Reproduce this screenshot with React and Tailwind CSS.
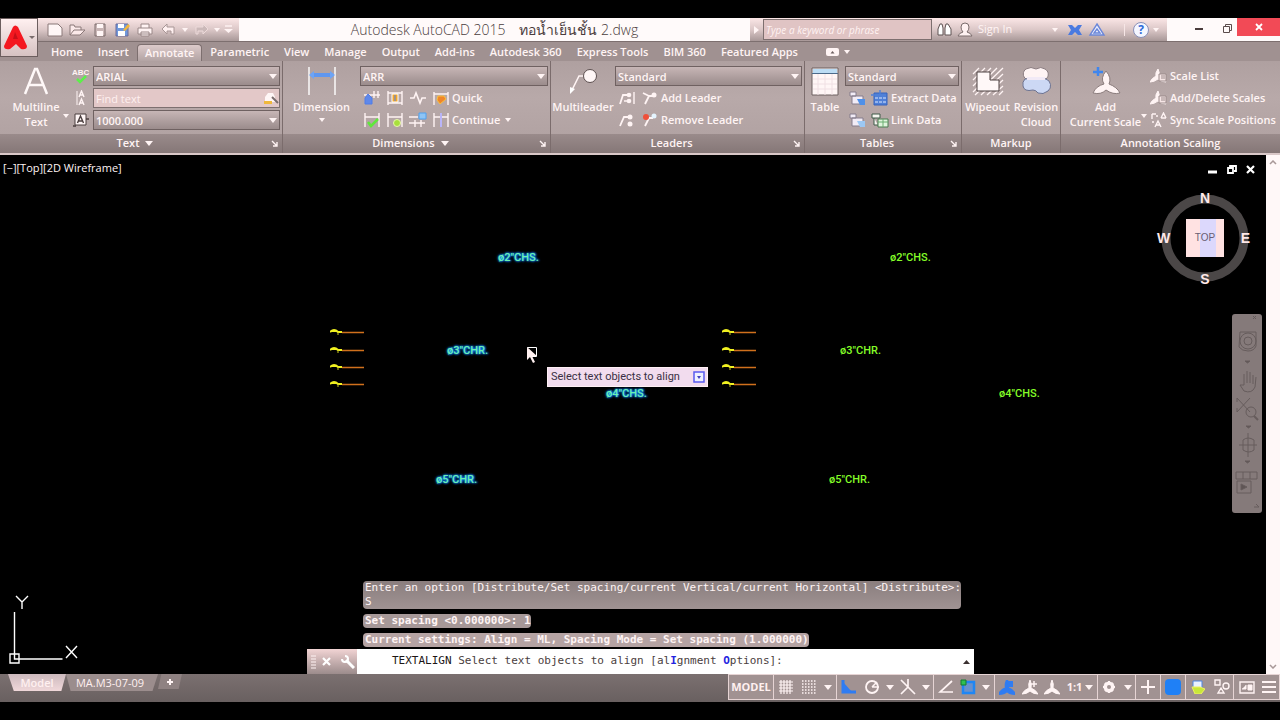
import React from "react";

const W = "#fff4f4";

function Ic({ w = 18, h = 16, children }) {
  return (
    <svg width={w} height={h} viewBox={`0 0 ${w} ${h}`} fill="none" stroke={W} strokeWidth="1.4" className="shrink-0" aria-hidden="true">
      {children}
    </svg>
  );
}

function Down({ small }) {
  return small ? (
    <svg width="6" height="4" viewBox="0 0 6 4" className="shrink-0" aria-hidden="true"><path d="M0 0h6L3 4z" fill={W} /></svg>
  ) : (
    <svg width="8" height="5" viewBox="0 0 8 5" className="shrink-0" aria-hidden="true"><path d="M0 0h8L4 5z" fill={W} /></svg>
  );
}

/* ---------- title bar icons ---------- */
const NewIcon = () => <Ic><path d="M2 2h10l4 4v8H2z" fill="#fff6f6" stroke="#8a7878" strokeWidth="1" /></Ic>;
const OpenIcon = () => <Ic><path d="M2 13V3h4l1 2h6v3M2 13l4-5h11l-5 5z" fill="#fbe9e9" stroke="#8a7878" strokeWidth="1" /></Ic>;
const SaveIcon = () => <Ic w={16}><path d="M3 2h10v12H3z" fill="#c9b6b6" stroke="#7d6c6c" strokeWidth="1" /><path d="M5 2h6v4H5zM5 9h6v5H5z" fill="#fff6f6" stroke="none" /></Ic>;
const SaveAsIcon = () => <Ic w={16}><path d="M2 2h12v12H2z" fill="#6f98dc" stroke="#6a6a9a" strokeWidth="1" /><path d="M4 2h6v4H4zM4 9h7v5H4z" fill="#fff" stroke="none" /><path d="M9 8l5-6 2 2-5 5z" fill="#f2b63c" stroke="none" /></Ic>;
const PrintIcon = () => <Ic><path d="M5 6V2h8v4M2 6h14v6H2zM5 10h8v4H5z" fill="#fff3f3" stroke="#9a8888" strokeWidth="1" /></Ic>;
const UndoIcon = () => <Ic><path d="M2 7l5-5v3h7v7h-3V9H7v3z" fill="#fff0f0" stroke="#a89696" strokeWidth="1" /></Ic>;
const RedoIcon = () => <Ic><path d="M16 7l-5-5v3H4v7h2V9h5v3z" fill="#cbb9b9" stroke="#eddada" strokeWidth="1" /></Ic>;

/* ---------- ribbon icons ---------- */
const SpellIcon = () => (
  <Ic w={18} h={16}>
    <text x="0" y="7" fontSize="8" fontWeight="700" fontFamily="Liberation Sans, sans-serif" fill={W} stroke="none">ABC</text>
    <path d="M5 11l3 3 6-6" stroke="#5cf04a" strokeWidth="2.500" />
  </Ic>
);
const AlignTextIcon = () => (
  <Ic w={18} h={16}>
    <path d="M5 1v14" strokeWidth="1" />
    <path d="M7 7l2.500-6L12 7M8 5h3M7 15l2.500-6 2.500 6M8 13h3" />
  </Ic>
);
const HeightIcon = () => (
  <Ic w={18} h={16}>
    <path d="M3 2h11v11H3z" fill="#fff6f6" stroke="#4a3e3e" strokeWidth="1" />
    <path d="M5.500 11L8.500 4l3 7M6.500 9h4" stroke="#4a3e3e" />
    <path d="M1 14h3M14 7h3" stroke="#4a3e3e" />
  </Ic>
);
const DimIcon = () => (
  <Ic w={28} h={30}>
    <path d="M1 1v28M27 1v28" stroke="#fff" />
    <path d="M3 9h22" stroke="#5f97f0" strokeWidth="4" />
    <path d="M1 9l5-4v8zM27 9l-5-4v8z" fill="#6ea4f5" stroke="none" />
  </Ic>
);
const BreakIcon = () => <Ic><path d="M1 5h16M11 1v7M15 1v7" /><path d="M5 4l4 4v6H2V8z" fill="#5f88ea" stroke="#4f7ce8" strokeWidth="1" /></Ic>;
const AdjustIcon = () => <Ic><path d="M2 1v14M16 1v14M2 3h14M2 13h14" /><path d="M6 4h6v8H6z" fill="#f4a62a" stroke="#fff" strokeWidth="1" /><path d="M9 5v6" stroke="#4d80ee" strokeWidth="1" /></Ic>;
const JogIcon = () => <Ic><path d="M1 8h4l2-5 4 10 2-5h4" strokeWidth="1.600" /></Ic>;
const QuickIcon = () => <Ic><path d="M2 2v13M16 2v13M2 4h14" /><path d="M6 6h6l2 3-6 5-3-4z" fill="#f0862a" stroke="#f9c040" strokeWidth="1" /></Ic>;
const InspectIcon = () => <Ic><path d="M2 1v14M16 1v14M2 5h14" /><path d="M5 10l3 4 7-7" stroke="#5fe83a" strokeWidth="2.500" /></Ic>;
const UpdateIcon = () => <Ic><path d="M2 1v14M16 1v14M2 5h14" /><circle cx="11" cy="11" r="3.500" fill="#a8e03c" stroke="#e9f7b0" strokeWidth="1" /></Ic>;
const SpaceIcon = () => <Ic><path d="M0 5h9M0 11h16M6 8v7M12 8v7" /><path d="M10 1h7v6h-7z" fill="#8ec4f4" stroke="#4fa0ee" strokeWidth="1" /></Ic>;
const ContinueIcon = () => <Ic><path d="M2 1v14M16 1v14M2 5h14" /><path d="M9 1v14" stroke="#b9b4f8" strokeWidth="2" /></Ic>;
const LeaderIcon = () => (
  <Ic w={32} h={30}>
    <path d="M5 24L12 10h6" strokeWidth="1.600" />
    <path d="M3 28l0-7 5 2z" fill="#fff" stroke="none" />
    <circle cx="23" cy="10" r="6.500" fill="#fff6f6" stroke="#5d5050" strokeWidth="1" />
  </Ic>
);
const LAlignIcon = () => <Ic><path d="M2 14l3-9h4" strokeWidth="1.800" /><path d="M6 11h4M16 2v12" /><circle cx="11" cy="5" r="2.300" fill={W} stroke="none" /><circle cx="11" cy="11" r="2.300" fill={W} stroke="none" /></Ic>;
const LCollectIcon = () => <Ic><path d="M2 14l4-9h4" strokeWidth="1.800" /><circle cx="12" cy="5" r="2.500" fill={W} stroke="none" /><circle cx="12" cy="12" r="2.500" fill={W} stroke="none" /></Ic>;
const LAddIcon = () => <Ic><path d="M4 14l4-8h4M2 3l6 3" strokeWidth="1.800" /><circle cx="13" cy="5" r="2.500" fill={W} stroke="none" /></Ic>;
const LRemoveIcon = () => <Ic><path d="M4 14l4-8h4" strokeWidth="1.800" /><circle cx="5" cy="5" r="3" fill="#f0503a" stroke="none" /><circle cx="13" cy="4" r="2.500" fill="#e4f4ff" stroke="none" /></Ic>;
const TableIcon = () => (
  <Ic w={28} h={30}>
    <path d="M1 2h26v27H1z" fill="#fff6f6" stroke="#6d6060" strokeWidth="1" />
    <path d="M2 3h24v4H2z" fill="#bcdcf4" stroke="none" />
    <path d="M1 7.500h26" stroke="#4c6a8a" strokeWidth="1" />
    <path d="M7 8v21M14 8v21M21 8v21M2 13h24M2 18h24M2 23h24" stroke="#f0e0e4" strokeWidth="1" />
  </Ic>
);
const SheetIcon = ({ c }) => <Ic><path d="M2 2h6v4H2zM4 6h11v8H4z" fill="#f2ecf6" stroke="#857c8c" strokeWidth="1" /><path d="M9 9h8v6h-5z" fill={c} stroke="none" /></Ic>;
const ExtractIcon = () => <Ic><path d="M3 3h13v12H3z" fill="#4f80d8" stroke="#3763bb" strokeWidth="1" /><path d="M4 8h11M4 12h11" stroke="#dce8ff" strokeWidth="1" strokeDasharray="3 1" /><path d="M0 5h6M9 0v5" stroke="#4f80d8" /></Ic>;
const LinkIcon = () => <Ic><path d="M1 2h8v4H1zM3 6v7h4" stroke="#3f5a48" fill="#f6f6f0" strokeWidth="1" /><path d="M7 7h10v8H7z" fill="#dff4dc" stroke="#4a7a50" strokeWidth="1" /><path d="M7 10h10M12 7v8" stroke="#6aae70" strokeWidth="1" /></Ic>;
const WipeoutIcon = () => (
  <Ic w={32} h={30}>
    <path d="M1 8l6-6M1 14L13 2M1 20L19 2M1 26L25 2M3 29L31 2M9 29L31 8M15 29l16-15M21 29l10-9M27 29l4-4" strokeWidth="1.300" />
    <path d="M5 6h13v8h9v11H5z" fill="#fff8f8" stroke="#4c4040" strokeWidth="1" />
  </Ic>
);
const CloudIcon = () => (
  <Ic w={30} h={30}>
    <path d="M5 13a6 6 0 0 1 0-10q5-3 10 0 5-3 9 0a6 6 0 0 1 1 10z" fill="#fff4f4" stroke="#8a7c80" strokeWidth="1" />
    <path d="M4 13q11-2 21 0a7 7 0 0 1 2 12q-5 4-10 2-2-3-5-3-9 2-10-4-1-4 2-7z" fill="#ccd8f4" stroke="#6c7290" strokeWidth="1" />
    <path d="M6 11h18v3H6z" fill="#f2eaf6" stroke="none" />
  </Ic>
);
const TRI = "M12 0q6 7 3 13 8 3 11 9-7 2-14-3-5 5-13 3 3-7 11-9Q6 7 12 0z";
const ScaleIcon = () => (
  <Ic w={30} h={30}>
    <g transform="translate(3 5)"><path d={TRI} fill="#fff4f4" stroke="#8a7c7c" strokeWidth="1" /></g>
    <path d="M7 1v9M2 6h10" stroke="#3f86ee" strokeWidth="2.500" />
  </Ic>
);
const MiniScale = () => (
  <Ic>
    <path d="M8 1q2 4 1 7 5 2 7 6-5 0-8-3-4 3-8 3 2-4 6-6-1-3 2-7z" fill={W} stroke={W} strokeWidth="1" />
    <path d="M9 6h7v7H9z" fill="#f6e6e6" stroke="#9a8a8a" strokeWidth="1" />
    <path d="M11 8h4M11 10h4" stroke="#9a8a8a" strokeWidth="1" />
  </Ic>
);
const SyncIcon = () => <Ic><path d="M2 2h4M2 2v5M11 6l2.500-5L16 6M11 6h5M2 10h2" /><path d="M5 15l3-6 3 6M6 13h4M6 4h2" /></Ic>;

/* ---------- ribbon parts ---------- */
function Panel({ title, arrow, launcher, children }) {
  return (
    <section className="flex min-w-0 flex-col border-r border-[#7b6c6c] last:border-r-0">
      <div className="flex h-[73px] bg-gradient-to-b from-[#afa0a0] via-[#b8a9a9] to-[#b2a3a3] pt-[5px]">{children}</div>
      <div className={`relative flex h-[19px] items-center justify-center gap-[6px] bg-gradient-to-b from-[#9a8b8b] to-[#857777] text-[11px] font-semibold ${launcher ? "pr-[12px]" : ""}`}>
        <h2>{title}</h2>
        {arrow && <Down />}
        {launcher && (
          <button aria-label={`${title} settings`} className="absolute right-[4px]">
            <Ic w={7} h={7}><path d="M1 1l5 5M6 2v4H2" /></Ic>
          </button>
        )}
      </div>
    </section>
  );
}

function Big({ icon, lines, arrow, sideArrow, className }) {
  return (
    <button className={`relative flex shrink-0 flex-col items-center text-[11px] font-semibold leading-[15px] ${className}`}>
      <span className="flex h-[33px] items-start justify-center">{icon}</span>
      {lines.map((l) => <span key={l} className="whitespace-nowrap">{l}</span>)}
      {arrow && <span className="pt-1"><Down small /></span>}
      {sideArrow && <span className="absolute right-[3px] top-[48px]"><Down small /></span>}
    </button>
  );
}

function Combo({ label, value }) {
  return (
    <div className="relative flex h-[20px] w-full items-center">
      <select aria-label={label} className="h-full w-full appearance-none border border-[#6f6161] bg-gradient-to-b from-[#c7b6b6] to-[#9b8c8c] px-[2px] text-[11px] font-semibold leading-none text-[#fff4f4]" defaultValue={value}>
        <option>{value}</option>
      </select>
      <span className="pointer-events-none absolute right-[3px]"><Down /></span>
    </div>
  );
}

const Tool = ({ label, children }) => <button aria-label={label} className="flex w-[23px] shrink-0 items-center justify-center">{children}</button>;

function Row({ children }) {
  return <div className="flex h-[20px] items-center whitespace-nowrap text-[11px] font-semibold">{children}</div>;
}

/* ---------- drawing content ---------- */
const labels = [
  { t: 'ø2"CHS.', pos: "left-[498px] top-[95px]", sel: true },
  { t: 'ø3"CHR.', pos: "left-[447px] top-[188px]", sel: true },
  { t: 'ø4"CHS.', pos: "left-[606px] top-[231px]", sel: true },
  { t: 'ø5"CHR.', pos: "left-[436px] top-[317px]", sel: true },
  { t: 'ø2"CHS.', pos: "left-[890px] top-[95px]" },
  { t: 'ø3"CHR.', pos: "left-[840px] top-[188px]" },
  { t: 'ø4"CHS.', pos: "left-[999px] top-[231px]" },
  { t: 'ø5"CHR.', pos: "left-[829px] top-[317px]" },
];

function Pipes({ className }) {
  return (
    <svg width="36" height="62" viewBox="0 0 36 62" className={`absolute ${className}`} aria-hidden="true">
      {[5, 23, 40, 57].map((y) => (
        <g key={y}>
          <path d={`M12 ${y + 0.5}h22`} stroke="#d0701c" strokeWidth="1.500" />
          <path d={`M0 ${y}q4-4 8 0l4 0`} stroke="#f0f020" strokeWidth="2" fill="#f0f020" />
          <path d={`M8 ${y}v3`} stroke="#c8c820" strokeWidth="1" />
        </g>
      ))}
    </svg>
  );
}

function ViewCube() {
  return (
    <div className="absolute right-[12px] top-[34px] h-[98px] w-[98px] text-[14px] font-bold leading-[16px] text-[#ffe9e9]" style={{ fontFamily: "Liberation Sans, sans-serif" }}>
      <svg width="98" height="98" viewBox="0 0 98 98" aria-hidden="true"><circle cx="49" cy="49" r="39" fill="none" stroke="#4b4747" strokeWidth="9" /></svg>
      <span className="absolute inset-x-0 top-[1px] text-center">N</span>
      <span className="absolute inset-x-0 bottom-0 text-center">S</span>
      <span className="absolute left-[1px] top-[41px]">W</span>
      <span className="absolute right-[4px] top-[41px]">E</span>
      <button className="absolute left-[30px] top-[30px] h-[38px] w-[38px] bg-[linear-gradient(90deg,#ffe2e2_36%,#dcd8fc_38%,#dcd8fc_78%,#ffe2e2_80%)] text-[10px] font-normal text-[#6a5f72]">TOP</button>
    </div>
  );
}

function NavBar() {
  return (
    <svg width="30" height="199" viewBox="0 0 30 199" className="absolute right-[4px] top-[159px]" fill="none" stroke="#665c5c" strokeWidth="1" role="img" aria-label="Navigation bar">
      <rect x="0" y="0" width="30" height="199" rx="3" fill="#857a7a" stroke="none" />
      <path d="M21 2l3 3M24 2l-3 3M8 18h16v14q-2 5-8 5t-9-4z" />
      <circle cx="16" cy="27" r="8" /><circle cx="16" cy="27" r="4" />
      <path d="M13 47h5l-2.500 2z" fill="#5f5555" />
      <path d="M8 71l4 6q8 3 11-4l1-10M12 71V60M15 69V57M18 69V58M21 70V61M8 71l4 0" />
      <path d="M5 84l13 14M18 84L5 98M5 84v4M5 98v-4" /><circle cx="19" cy="98" r="5" /><path d="M22 102l4 4" strokeWidth="2" />
      <path d="M14 112h5l-2.500 2z" fill="#5f5555" />
      <path d="M16 119v24M7 131h18M11 126q5-4 11 0v10q-5 4-11 0z" />
      <path d="M13 147h5l-2.500 2z" fill="#5f5555" />
      <path d="M4 158h21v7H4zM11 158v7M18 158v7M5 167h14v12H5z" /><path d="M9 170l6 3-6 3z" fill="#5f5555" />
      <path d="M22 193h5M24 190l3 3" />
    </svg>
  );
}

/* ---------- status bar ---------- */
const Cell = ({ label, w, children }) => <button aria-label={label} className={`flex h-full shrink-0 items-center justify-center ${w}`}>{children}</button>;
const Group = ({ children }) => <div className="flex h-[26px] shrink-0 items-center border border-l-0 border-[#e6d4d4] bg-[#a19292]">{children}</div>;
const TRI_S = "M8 0q2 4 1 8 5 2 7 6-5 0-8-3-3 3-8 3 2-4 7-6-1-4 1-8z";

function StatusBar() {
  return (
    <footer className="flex h-[28px] items-start bg-gradient-to-b from-[#7b7070] to-[#696060] text-[#fff0f0]">
      <nav aria-label="Layouts" className="flex flex-1 items-start pl-2 text-[11px]">
        <button className="h-[17px] w-[58px] bg-gradient-to-b from-[#ccb9bd] to-[#f0d8da] font-semibold leading-[16px] [clip-path:polygon(0_0,100%_0,92%_100%,10%_100%)]">Model</button>
        <button className="h-[17px] w-[92px] bg-[#9b8d8d] pr-1 leading-[16px] [clip-path:polygon(0_0,100%_0,94%_100%,5%_100%)]">MA.M3-07-09</button>
        <button aria-label="New layout" className="flex h-[15px] w-[24px] items-center justify-center bg-[#8f8282] [clip-path:polygon(14%_0,100%_0,86%_100%,0_100%)]">
          <Ic w={8} h={8}><path d="M4 1v6M1 4h6" strokeWidth="2" /></Ic>
        </button>
      </nav>
      <div className="flex shrink-0 border-l border-[#e6d4d4]">
        <Group><button className="w-[44px] text-center text-[11px] font-bold">MODEL</button></Group>
        <Group>
          <Cell label="Grid" w="w-[24px]"><Ic w={14} h={14}><path d="M2 0v14M5 0v14M8 0v14M11 0v14M0 2h14M0 5h14M0 8h14M0 11h14" strokeWidth="1.200" /></Ic></Cell>
          <Cell label="Snap" w="w-[21px]"><Ic w={14} h={14}><path d="M0 1h14M0 4h14M0 7h14M0 10h14M0 13h14" strokeWidth="1.500" strokeDasharray="1.500 1.500" /></Ic></Cell>
          <Cell label="Snap menu" w="w-[17px]"><Down /></Cell>
        </Group>
        <Group>
          <Cell label="Ortho" w="w-[24px]"><Ic w={16} h={16}><path d="M2 1v12h13" stroke="#2f7cf2" strokeWidth="3" /><path d="M3 4l8 9H3z" fill="#2f7cf2" stroke="none" /></Ic></Cell>
          <Cell label="Polar" w="w-[22px]"><Ic w={16} h={16}><circle cx="8" cy="8" r="6" strokeWidth="1.800" /><path d="M8 8h7M8 8l5-5" strokeWidth="1.500" /></Ic></Cell>
          <Cell label="Polar menu" w="w-[14px]"><Down /></Cell>
          <Cell label="Isometric" w="w-[22px]"><Ic w={16} h={16}><path d="M1 1l14 14M8 0v8L1 15" strokeWidth="1.700" /></Ic></Cell>
          <Cell label="Isometric menu" w="w-[14px]"><Down /></Cell>
        </Group>
        <Group>
          <Cell label="Object tracking" w="w-[23px]"><Ic w={16} h={14}><path d="M14 1L2 12h13" strokeWidth="1.700" /></Ic></Cell>
          <Cell label="Object snap" w="w-[21px]"><Ic w={16} h={16}><path d="M3 3h11v11H3z" stroke="#1f86f4" strokeWidth="2.500" fill="#6a90cc" /><path d="M1 1h5v5H1z" fill="#2fc050" stroke="#157a30" strokeWidth="1" /></Ic></Cell>
          <Cell label="Object snap menu" w="w-[16px]"><Down /></Cell>
        </Group>
        <Group>
          <Cell label="Annotation visibility" w="w-[24px]"><Ic w={16} h={15}><path d={TRI_S} fill="#2f7cf2" stroke="#2f7cf2" strokeWidth="2" /><path d="M9 1h5v6H9z" fill="#2f7cf2" stroke="none" /></Ic></Cell>
          <Cell label="Auto scale" w="w-[22px]"><Ic w={16} h={15}><path d={TRI_S} fill={W} strokeWidth="1" /><path d="M12 1v6M9 4h6" strokeWidth="1.500" /></Ic></Cell>
          <Cell label="Annotation scale" w="w-[22px]"><Ic w={16} h={15}><path d={TRI_S} fill={W} strokeWidth="1" /></Ic></Cell>
          <button className="flex h-full w-[34px] items-center justify-center gap-[3px] text-[11px] font-bold">1:1<Down /></button>
        </Group>
        <Group>
          <Cell label="Workspace" w="w-[22px]"><Ic w={14} h={14}><circle cx="7" cy="7" r="4" strokeWidth="3" /><path d="M7 1v12M1 7h12M3 3l8 8M11 3l-8 8" strokeWidth="2" /><circle cx="7" cy="7" r="2" fill="#a19292" stroke="none" /></Ic></Cell>
          <Cell label="Workspace menu" w="w-[15px]"><Down /></Cell>
        </Group>
        <Group><Cell label="Annotation monitor" w="w-[24px]"><Ic w={14} h={14}><path d="M7 0v14M0 7h14" strokeWidth="2" /></Ic></Cell></Group>
        <Group><Cell label="Hardware acceleration" w="w-[24px]"><Ic w={16} h={16}><rect x="0" y="0" width="16" height="16" rx="4" fill="#1f80f6" stroke="none" /></Ic></Cell></Group>
        <Group>
          <Cell label="Isolate objects" w="w-[24px]"><Ic w={14} h={14}><path d="M2 1h9v7H2z" fill="#eaf2ff" stroke="#4f86e0" strokeWidth="1" /><path d="M1 7h8l5 2-4 5H4z" fill="#c8e83a" stroke="#f0f060" strokeWidth="1" /></Ic></Cell>
          <Cell label="Shapes" w="w-[23px]"><Ic w={16} h={16}><path d="M1 1h5v5H1zM7 9l3 5H4z" /><circle cx="12" cy="7" r="3" /></Ic></Cell>
        </Group>
        <Group>
          <Cell label="Clean screen" w="w-[25px]"><Ic w={16} h={13}><path d="M1 1h14v11H1z" /><path d="M3 8h4V4M9 9V4h4v5z" fill={W} stroke={W} strokeWidth="1" /></Ic></Cell>
          <Cell label="Customize" w="w-[20px]"><Ic w={14} h={12}><path d="M0 1h14M0 6h14M0 11h14" strokeWidth="2" /></Ic></Cell>
        </Group>
      </div>
    </footer>
  );
}

const tabs = ["Home", "Insert", "Annotate", "Parametric", "View", "Manage", "Output", "Add-ins", "Autodesk 360", "Express Tools", "BIM 360", "Featured Apps"];

export default function App() {
  return (
    <div className="flex min-h-screen flex-col bg-black py-[18px] text-[#fff4f4]" style={{ fontFamily: "'Open Sans', 'Noto Sans', sans-serif" }}>
      <header className="flex bg-[#a09191]">
        <button aria-label="Application menu" className="flex h-[39px] w-[38px] shrink-0 items-center justify-center border border-[#6c5e5e] bg-gradient-to-b from-[#fff0f0] to-[#d6c2c2]">
          <svg width="34" height="28" viewBox="0 0 34 28" aria-hidden="true">
            <path d="M2 22L11 3q2-3 5 0l9 19q0 4-6 3l-5-5-6 5q-6 1-6-3z" fill="#f41820" />
            <path d="M13 8l3 7h-5z" fill="#c81018" />
            <path d="M27 12h6l-3 3z" fill="#7a6c6c" />
          </svg>
        </button>
        <div className="flex min-w-0 flex-1 flex-col">
          <div className="flex h-[24px] border-b border-[#7d6f6f] bg-[#fffafa]">
            <div className="flex w-[201px] shrink-0 items-center gap-1 bg-gradient-to-b from-[#fbe6e6] via-[#dcc8c8] to-[#a89898] pl-2">
              <button aria-label="New"><NewIcon /></button>
              <button aria-label="Open"><OpenIcon /></button>
              <button aria-label="Save" className="ml-[2px]"><SaveIcon /></button>
              <button aria-label="Save as" className="ml-[2px]"><SaveAsIcon /></button>
              <button aria-label="Plot" className="ml-[2px]"><PrintIcon /></button>
              <button aria-label="Undo" className="ml-[2px]"><UndoIcon /></button>
              <Down small />
              <button aria-label="Redo"><RedoIcon /></button>
              <Down small />
              <Ic w={9} h={9}><path d="M1 1h7" /><path d="M0 4h9L4.500 8z" fill={W} stroke="none" /></Ic>
            </div>
            <h1 className="flex flex-1 items-center justify-center gap-[14px] whitespace-nowrap text-[14px] font-light text-[#4a3c3c]">
              <span>Autodesk AutoCAD 2015</span>
              <span>ทอน้ำเย็นชั้น 2.dwg</span>
            </h1>
            <div className="flex w-[417px] shrink-0 items-center bg-gradient-to-b from-[#fbe6e6] via-[#dcc8c8] to-[#a89898]">
              <span className="w-[13px] pl-1"><Ic w={5} h={8}><path d="M0 0l5 4-5 4z" fill={W} stroke="none" /></Ic></span>
              <input aria-label="Search" placeholder="Type a keyword or phrase" className="h-[21px] w-[169px] border border-[#7d6f6f] bg-[#e0c4c4] px-[2px] text-[10px] italic placeholder:text-[#fff2f2]" />
              <button aria-label="Find" className="ml-[3px]"><Ic><path d="M3 13V7l2-5h2l1 4v7zM10 13V6l1-4h2l3 5v6z" fill="#fff" stroke="#5e5252" strokeWidth="1" /></Ic></button>
              <button className="ml-1 flex items-center gap-[5px] text-[11px]"><Ic w={16}><path d="M1 14q1-3 5-4Q4 8 4 5q0-4 4-4t4 4q0 3-2 5 4 1 5 4z" fill="#fff2f2" stroke="#7a6c6c" strokeWidth="1" /></Ic>Sign In</button>
              <span className="flex flex-1 items-center justify-end pr-2"><Down small /></span>
              <button aria-label="Exchange"><Ic><path d="M2 3h4l3 3 3-3h4l-3 5 3 5h-4l-3-3-3 3H2l3-5z" fill="#4a7ae0" stroke="none" /></Ic></button>
              <button aria-label="Autodesk 360 status" className="ml-1"><Ic><path d="M9 2l7 11H2zM9 7l3 4H6z" fill="#eef0ff" stroke="#6a86d8" /></Ic></button>
              <span className="ml-[18px] h-[12px] border-l border-[#f6e6e6]" />
              <button aria-label="Help" className="ml-2 flex items-center gap-1">
                <span className="flex h-[16px] w-[16px] items-center justify-center rounded-full border border-[#8a90b8] bg-[#f4f6ff] text-[12px] font-bold text-[#2f6ad8]">?</span>
                <Down small />
              </button>
              <span className="w-2" />
            </div>
            <div className="flex w-[113px] shrink-0 items-start">
              <button aria-label="Minimize" className="flex h-[22px] w-[56px] items-center justify-center pl-2"><svg width="8" height="2" aria-hidden="true"><path d="M0 0h8v2H0z" fill="#4a3c3c" /></svg></button>
              <button aria-label="Restore" className="flex h-[20px] w-[14px] items-center"><svg width="9" height="9" viewBox="0 0 9 9" fill="none" stroke="#5a4c4c" aria-hidden="true"><path d="M0.500 2.500h6v6h-6zM2.500 2.500v-2h6v6h-2" /></svg></button>
              <button aria-label="Close" className="flex h-[18px] w-[43px] items-center justify-center bg-[#f24a56]"><svg width="8" height="8" viewBox="0 0 8 8" aria-hidden="true"><path d="M1 1l6 6M7 1L1 7" stroke="#fff" strokeWidth="1.800" /></svg></button>
            </div>
          </div>
          <nav aria-label="Ribbon tabs" className="flex h-[19px] items-center gap-px pl-[6px] text-[11px] font-semibold">
            {tabs.map((t) => (
              <a key={t} href="#ribbon" className={t === "Annotate" ? "h-[17px] self-end whitespace-nowrap rounded-t-sm border border-b-0 border-[#7d6f6f] bg-gradient-to-b from-[#dccaca] to-[#b3a4a4] px-[7px] leading-[15px]" : "whitespace-nowrap px-[7px] leading-[19px]"}>{t}</a>
            ))}
            <button aria-label="Ribbon display" className="ml-5 flex items-center gap-[5px]"><Ic w={13} h={8}><rect x="0" y="0" width="13" height="8" rx="2" fill={W} stroke="none" /><path d="M4.500 5.500h4L6.500 3z" fill="#6c5e5e" stroke="none" /></Ic><Down small /></button>
          </nav>
        </div>
      </header>

      <div id="ribbon" className="grid grid-cols-[283fr_268fr_254fr_157fr_99fr_219fr] border-b-2 border-[#d9c8c8]">
        <Panel title="Text" arrow launcher>
          <Big
            className="w-[72px]"
            sideArrow
            icon={<Ic w={26} h={30}><path d="M2 28L12 3h2l10 25M6 19h14" stroke="#fff8f8" strokeWidth="2.500" /></Ic>}
            lines={["Multiline", "Text"]}
          />
          <div className="flex flex-col gap-[2px]">
            {[["Check spelling", <SpellIcon />], ["Align text", <AlignTextIcon />], ["Text height", <HeightIcon />]].map(([l, i]) => (
              <button key={l} aria-label={l} className="flex h-[20px] w-[21px] items-center">{i}</button>
            ))}
          </div>
          <div className="flex min-w-0 flex-1 flex-col gap-[2px] pr-[2px]">
            <Combo label="Text style" value="ARIAL" />
            <div className="relative flex h-[20px] items-center">
              <input aria-label="Find text" placeholder="Find text" className="h-full w-full border border-[#7d6f6f] bg-[#e3c8c8] px-[2px] text-[11px] placeholder:text-[#fff0f0]" />
              <span className="absolute right-0"><Ic><path d="M3 12V7l3-4h5l2 4v5z" fill="#fff6f6" stroke="none" /><path d="M2 11h8v3H2z" fill="#f0b83c" stroke="none" /><path d="M10 7l6 6" stroke="#7a6c6c" strokeWidth="2" /></Ic></span>
            </div>
            <Combo label="Text height value" value="1000.000" />
          </div>
        </Panel>
        <Panel title="Dimensions" arrow launcher>
          <Big className="w-[77px]" icon={<DimIcon />} lines={["Dimension"]} arrow />
          <div className="flex min-w-0 flex-1 flex-col gap-[2px] pr-[2px]">
            <Combo label="Dimension style" value="ARR" />
            <Row><Tool label="Break"><BreakIcon /></Tool><Tool label="Adjust space"><AdjustIcon /></Tool><Tool label="Jog"><JogIcon /></Tool><Tool label="Quick dimension"><QuickIcon /></Tool><button>Quick</button></Row>
            <Row><Tool label="Inspect"><InspectIcon /></Tool><Tool label="Update"><UpdateIcon /></Tool><Tool label="Space"><SpaceIcon /></Tool><Tool label="Continue dimension"><ContinueIcon /></Tool><button className="flex items-center gap-[5px]">Continue<Down small /></button></Row>
          </div>
        </Panel>
        <Panel title="Leaders" launcher>
          <Big className="w-[64px]" icon={<LeaderIcon />} lines={["Multileader"]} />
          <div className="flex min-w-0 flex-1 flex-col gap-[2px] pr-[2px]">
            <Combo label="Leader style" value="Standard" />
            <Row><Tool label="Align"><LAlignIcon /></Tool><Tool label="Add"><LAddIcon /></Tool><button>Add Leader</button></Row>
            <Row><Tool label="Collect"><LCollectIcon /></Tool><Tool label="Remove"><LRemoveIcon /></Tool><button>Remove Leader</button></Row>
          </div>
        </Panel>
        <Panel title="Tables" launcher>
          <Big className="w-[40px]" icon={<TableIcon />} lines={["Table"]} />
          <div className="flex min-w-0 flex-1 flex-col gap-[2px] pr-[2px]">
            <Combo label="Table style" value="Standard" />
            <Row><Tool label="Download"><SheetIcon c="#4f90e8" /></Tool><Tool label="Extract"><ExtractIcon /></Tool><button>Extract Data</button></Row>
            <Row><Tool label="Upload"><SheetIcon c="#9cc8f4" /></Tool><Tool label="Link"><LinkIcon /></Tool><button>Link Data</button></Row>
          </div>
        </Panel>
        <Panel title="Markup">
          <Big className="w-[51px]" icon={<WipeoutIcon />} lines={["Wipeout"]} />
          <Big className="w-[46px]" icon={<CloudIcon />} lines={["Revision", "Cloud"]} />
        </Panel>
        <Panel title="Annotation Scaling">
          <Big className="w-[89px]" sideArrow icon={<ScaleIcon />} lines={["Add", "Current Scale"]} />
          <div className="flex flex-1 flex-col gap-[2px]">
            <Row><button className="flex items-center gap-[2px]"><MiniScale />Scale List</button></Row>
            <Row><button className="flex items-center gap-[2px]"><MiniScale />Add/Delete Scales</button></Row>
            <Row><button className="flex items-center gap-[2px]"><SyncIcon />Sync Scale Positions</button></Row>
          </div>
        </Panel>
      </div>

      <main className="flex flex-1">
        <div className="relative flex-1 overflow-hidden">
          <p className="absolute left-[3px] top-[5px] text-[11px] leading-[16px]">[−][Top][2D Wireframe]</p>
          <div className="absolute right-[10px] top-[10px] flex items-center gap-[9px]">
            <button aria-label="Minimize drawing"><Ic w={10} h={9}><path d="M0 7h9" stroke="#fff" strokeWidth="3" /></Ic></button>
            <button aria-label="Restore drawing"><Ic w={10} h={9}><path d="M1 3h5v5H1zM3 2V1h6v5H7" stroke="#fff" strokeWidth="1.800" /></Ic></button>
            <button aria-label="Close drawing"><Ic w={10} h={9}><path d="M1 1l7 7M8 1L1 8" stroke="#fff" strokeWidth="2.200" /></Ic></button>
          </div>

          {labels.map((l) => (
            <span
              key={l.pos}
              style={{ fontFamily: "Roboto, 'Liberation Sans', sans-serif" }}
              className={`absolute whitespace-nowrap text-[11px] font-medium leading-[16px] ${l.pos} ${l.sel ? "text-[#6cf0b0] [text-shadow:0_0_3px_#0f8cff,0_0_2px_#0f8cff,1px_0_2px_#0a6cf0]" : "text-[#84fc28]"}`}
            >
              {l.t}
            </span>
          ))}
          <Pipes className="left-[330px] top-[172px]" />
          <Pipes className="left-[722px] top-[172px]" />

          <ViewCube />
          <NavBar />

          <svg width="14" height="18" viewBox="0 0 14 18" className="absolute left-[526px] top-[191px]" aria-hidden="true">
            <path d="M1.500 1.500h9v9h-9z" fill="none" stroke="#fff" />
            <path d="M1 1v13l3-3 3 6 2-1-3-6h5z" fill="#fff0f0" />
          </svg>
          <div role="tooltip" className="absolute left-[547px] top-[212px] flex h-[20px] w-[161px] items-center justify-between border border-[#fff0f4] bg-[#f2dcee] pl-[3px] pr-[2px] text-[11px] text-[#3a3044]" style={{ fontFamily: "Roboto, sans-serif" }}>
            <span className="whitespace-nowrap">Select text objects to align</span>
            <svg width="12" height="12" viewBox="0 0 12 12" aria-hidden="true"><path d="M1 1h10v10H1z" fill="#eef0ff" stroke="#5a5af0" strokeWidth="1.500" /><path d="M4 5h4L6 8z" fill="#4040c0" /></svg>
          </div>

          <svg width="84" height="76" viewBox="0 0 84 76" className="absolute bottom-[6px] left-[4px]" fill="none" stroke="#fff" strokeWidth="1.400" role="img" aria-label="UCS axes">
            <path d="M10.500 20v47h48M6 62h9v9H6z" />
            <path d="M12 4l6 6 6-6M18 10v7M62 54l11 12M73 54L62 66" />
          </svg>

          <div className="absolute bottom-0 left-[307px] w-[667px] text-[11px]" style={{ fontFamily: "'DejaVu Sans Mono', 'Liberation Mono', monospace" }}>
            <div className="flex flex-col items-start gap-[5px] pb-[2px] pl-[56px]">
              <p className="rounded-sm bg-gradient-to-b from-[#8a7e7e] to-[#a09393] pl-[2px] leading-[14px] whitespace-nowrap">Enter an option [Distribute/Set spacing/current Vertical/current Horizontal] &lt;Distribute&gt;:<br />S</p>
              <p className="rounded-sm bg-[#a69898] pl-[2px] font-bold leading-[14px] whitespace-nowrap">Set spacing &lt;0.000000&gt;: 1</p>
              <p className="rounded-sm bg-[#b5a3a3] pl-[2px] font-bold leading-[14px] whitespace-nowrap">Current settings: Align = ML, Spacing Mode = Set spacing (1.000000)</p>
            </div>
            <div className="flex h-[25px] items-center bg-white text-[#4a4040]">
              <div className="flex h-full w-[50px] shrink-0 items-center gap-[6px] bg-gradient-to-b from-[#f2d4d4] to-[#9c8c8c] pl-1">
                <Ic w={5} h={14}><path d="M0 1h5M0 4h5M0 7h5M0 10h5M0 13h5" strokeWidth="1.200" /></Ic>
                <button aria-label="Close command line"><Ic w={9} h={9}><path d="M1 1l7 7M8 1L1 8" stroke="#fff" strokeWidth="2.200" /></Ic></button>
                <button aria-label="Customize command line" className="ml-1"><Ic w={14} h={14}><path d="M5 5l8 8" stroke="#fff" strokeWidth="3" /><path d="M1 4a3 3 0 1 0 3-3" stroke="#fff" strokeWidth="2" /></Ic></button>
              </div>
              <p className="flex-1 whitespace-pre pl-[35px]"><span className="text-[#1c1616]">TEXTALIGN</span> Select text objects to align [al<b className="text-[#2424e0]">I</b>gnment <b className="text-[#2424e0]">O</b>ptions]:</p>
              <button aria-label="Show history" className="pr-1"><svg width="7" height="4" viewBox="0 0 7 4" aria-hidden="true"><path d="M0 4h7L3.500 0z" fill="#3a3030" /></svg></button>
            </div>
          </div>
        </div>
        <div className="flex w-[14px] shrink-0 flex-col items-center justify-between bg-[#fff8f8] py-[5px]">
          <svg width="8" height="5" viewBox="0 0 8 5" fill="none" stroke="#a89898" strokeWidth="1.500" aria-hidden="true"><path d="M1 4l3-3 3 3" /></svg>
          <svg width="8" height="5" viewBox="0 0 8 5" fill="none" stroke="#a89898" strokeWidth="1.500" aria-hidden="true"><path d="M1 1l3 3 3-3" /></svg>
        </div>
      </main>

      <StatusBar />
    </div>
  );
}
